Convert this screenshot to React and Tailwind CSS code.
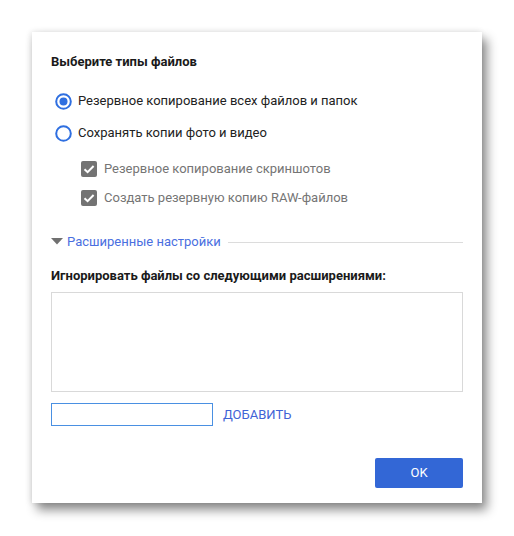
import React from "react";

function Radio({ checked }) {
  return (
    <svg width="17" height="17" viewBox="0 0 17 17" className="shrink-0">
      <circle cx="8.5" cy="8.5" r="7.3" fill="white" stroke="#2f6fe0" strokeWidth="2" />
      {checked && <circle cx="8.5" cy="8.5" r="4" fill="#2f6fe0" />}
    </svg>
  );
}

function Check() {
  return (
    <svg width="16" height="16" viewBox="0 0 16 16" className="shrink-0">
      <rect x="0" y="0" width="16" height="16" rx="2" fill="#737373" />
      <path d="M3.5 8.2 L6.6 11.2 L12.6 5" fill="none" stroke="white" strokeWidth="2" />
    </svg>
  );
}

export default function App() {
  return (
    <div
      className="w-[514px] h-[536px] bg-white pt-[32px] pl-[32px]"
      style={{ fontFamily: "Roboto, 'Liberation Sans', sans-serif" }}
    >
      <div className="w-[450px] h-[471px] bg-white shadow-[5px_7px_10px_rgba(0,0,0,0.45),-1px_0_6px_rgba(0,0,0,0.12)] pl-[19px] pr-[19px] pt-[22px] flex flex-col">
        <div className="text-[13px] font-bold text-[#1a1a1a] leading-[16px]">Выберите типы файлов</div>

        <div className="mt-[22px] flex items-center gap-[6px] pl-[4px] h-[18px]">
          <Radio checked />
          <span className="text-[13px] text-[#222]">Резервное копирование всех файлов и папок</span>
        </div>
        <div className="mt-[14px] flex items-center gap-[6px] pl-[4px] h-[18px]">
          <Radio />
          <span className="text-[13px] text-[#222]">Сохранять копии фото и видео</span>
        </div>

        <div className="mt-[19px] flex items-center gap-[7px] pl-[30px] h-[16px]">
          <Check />
          <span className="text-[13px] text-[#757575]">Резервное копирование скриншотов</span>
        </div>
        <div className="mt-[13px] flex items-center gap-[7px] pl-[30px] h-[16px]">
          <Check />
          <span className="text-[13px] text-[#757575]">Создать резервную копию RAW-файлов</span>
        </div>

        <div className="mt-[28px] flex items-center h-[16px]">
          <svg width="12" height="8" viewBox="0 0 12 8" className="shrink-0">
            <path d="M0 0 L12 0 L6 6.5 Z" fill="#707070" />
          </svg>
          <span className="ml-[4px] text-[13px] text-[#4a6fe0] whitespace-nowrap">Расширенные настройки</span>
          <div className="ml-[7px] flex-1 h-px bg-[#dcdcdc]" />
        </div>

        <div className="mt-[18px] text-[13px] font-bold text-[#1a1a1a] leading-[16px]">
          Игнорировать файлы со следующими расширениями:
        </div>

        <div className="mt-[8px] w-[412px] h-[100px] border border-[#d9d9d9]" />

        <div className="mt-[11px] flex items-center">
          <div className="w-[162px] h-[23px] border border-[#4a90e2]" />
          <span className="ml-[10px] text-[13px] text-[#3f63d6]">ДОБАВИТЬ</span>
        </div>

        <div className="mt-[32px] flex justify-end">
          <div className="w-[88px] h-[30px] bg-[#3367d6] rounded-[2px] flex items-center justify-center text-[13px] text-white">
            OK
          </div>
        </div>
      </div>
    </div>
  );
}
